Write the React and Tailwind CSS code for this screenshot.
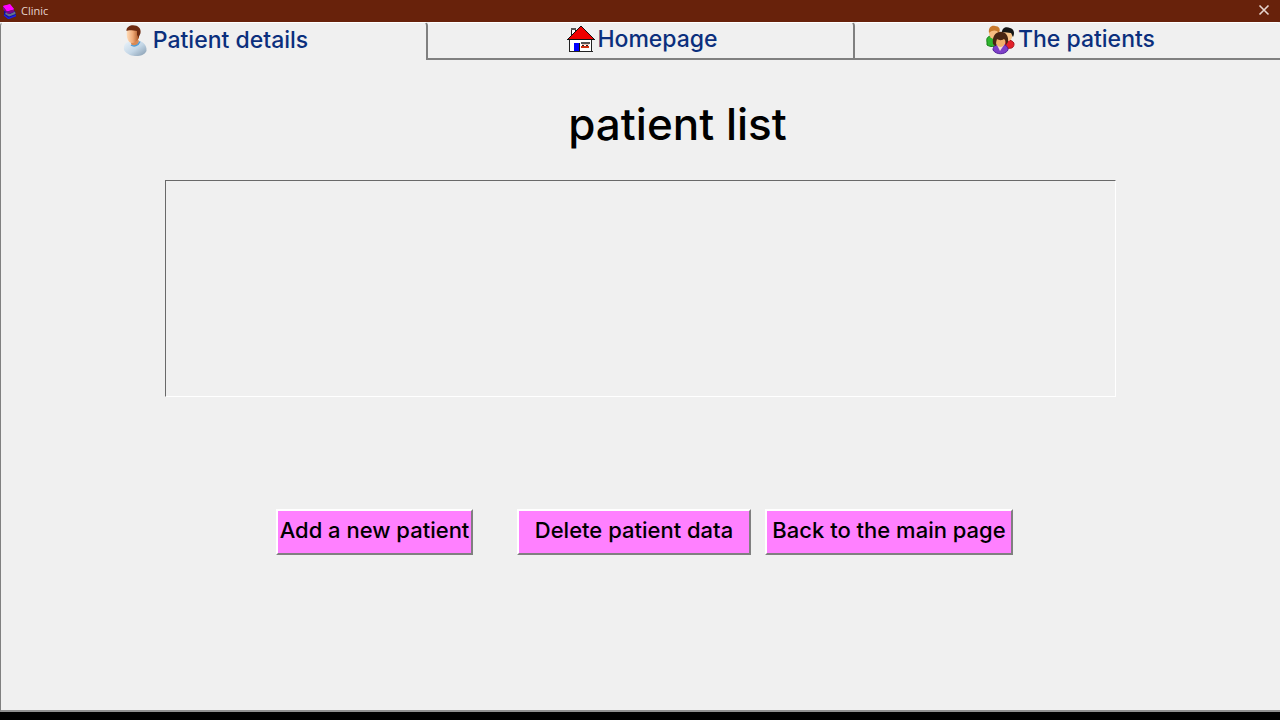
import React from "react";

function AppIcon() {
  return (
    <svg aria-hidden="true" className="h-4 w-4 shrink-0" viewBox="0 0 16 16">
      <path d="M3 8 3 11.500 7 16 15 13 14 8z" fill="#10109c" />
      <path d="M5 9 9 11 14 8.500 14.500 11 8 13.500 4 11z" fill="#64748b" />
      <path d="M3 12 7.500 15.500 15 12.500" fill="none" stroke="#2020e0" strokeWidth="1.400" />
      <path d="M2 3 9 1.500 13 6.500 6 8.500z" fill="#ff00ff" />
      <path d="M2 3v3.500l5 4.500 6-2V6.500L6 8.500z" fill="#7a0a86" />
      <path d="M2 3 9 1 13 6 6 8z" fill="#ff00ff" />
    </svg>
  );
}

function PersonIcon() {
  return (
    <svg aria-hidden="true" className="h-8 w-7 shrink-0" viewBox="0 0 28 32">
      <defs>
        <linearGradient id="skin" x1="0" x2="1">
          <stop offset="0" stopColor="#ffdcb8" />
          <stop offset="0.500" stopColor="#efaa78" />
          <stop offset="1" stopColor="#a85220" />
        </linearGradient>
        <linearGradient id="shirt" x1="0" y1="0" x2="1" y2="1">
          <stop offset="0" stopColor="#eef6fc" />
          <stop offset="0.550" stopColor="#c3d6e6" />
          <stop offset="1" stopColor="#8399ad" />
        </linearGradient>
      </defs>
      <path d="M1 26c-.5-5 1-7 4-8l8-2c6 1 11 4 10.500 11-2 4-6 5-10 5S4 31 1 26z" fill="url(#shirt)" />
      <path d="M8 19c0 4 7 4 8-2l-2-3H8z" fill="#d98a55" />
      <path d="M8 21c3 2 7 1 9-3.500" fill="none" stroke="#4b9bd8" strokeWidth="1.400" />
      <path d="M4 6c3-2 9-2 12 1v7c-2 3-4 5-7 5-4-.5-6-5-5-13z" fill="url(#skin)" />
      <path d="M3.500 7C3 3 7 1.200 10 1.200c5 0 8.500 3 7.500 8l-2 4.500-1.500-3V7C11 7 6 5.500 3.500 7z" fill="#6e2c12" />
    </svg>
  );
}

function HouseIcon() {
  return (
    <svg aria-hidden="true" className="h-7 w-7 shrink-0" viewBox="0 0 28 28" shapeRendering="crispEdges">
      <path d="M4 3h4v8H4z" fill="#fff" stroke="#222" />
      <path d="M4 3h5v2H4z" fill="#555" />
      <path d="M2.500 14h22v12h-22z" fill="#fff" stroke="#222" strokeWidth="1" />
      <path d="M14 1 27 14H1z" fill="#f00000" stroke="#111" strokeWidth="1" />
      <path d="M7 18h5v8H7z" fill="#0000ff" />
      <path d="M12 18h1v8h-1z" fill="#111" />
      <path d="M14 17h9v2h-9z" fill="#555" />
      <path d="M15 19h7v1h-7z" fill="#f4c0b0" />
      <path d="M14 21h8v2h-8z" fill="#d03010" />
      <path d="M15 20h2v1h-2zM19 20h2v1h-2z" fill="#222" />
      <path d="M2 26h24v1H2z" fill="#222" />
    </svg>
  );
}

function PeopleIcon() {
  return (
    <svg aria-hidden="true" className="h-8 w-8 shrink-0" viewBox="0 0 32 32">
      <path d="M3 19c-1-4 1-6 5-6l6 1v8c-3 2-8 2-11 0z" fill="#2fb62f" stroke="#168016" />
      <path d="M21 18c4-2 9 0 9 3 0 4-3 5-8 4z" fill="#e3202a" stroke="#a80e18" />
      <ellipse cx="10" cy="10" rx="5" ry="6" fill="#f8bd80" />
      <path d="M5 10c-1-6 3-8 6-7 4 0 6 3 4 7-2-3-5-3-7-2-1 0-2 1-3 2z" fill="#c8792c" />
      <ellipse cx="24" cy="12" rx="4.500" ry="6" fill="#f8c58a" />
      <path d="M18 9c0-4 4-6 8-4 4 1 5 5 3 9-1-1-1-3-2-4-3 0-5-1-9-1z" fill="#151515" />
      <path d="M9 27c0-4 3-6 7-6 5 0 8 2 8 6-3 5-12 5-15 0z" fill="#7d3fc8" stroke="#50209a" />
      <path d="m13 22 3 6 4-6z" fill="#f3dcd8" />
      <ellipse cx="16.500" cy="18" rx="5" ry="6" fill="#f0b06c" />
      <path d="M9 21c-1-7 2-12 7-12 5-1 9 4 8 10l-2 3c0-3 0-4-2-6-3 2-5 1-7 0-1 3-1 4-1 7-1 0-2-1-3-2z" fill="#4a2613" />
    </svg>
  );
}

function Tab({ icon, label, selected, last }) {
  return (
    <button
      type="button"
      role="tab"
      aria-selected={selected}
      className={
        "flex min-w-0 flex-1 items-center justify-center gap-0.5 rounded-t border-t border-t-white pb-1 pl-1 text-[23px] leading-7 font-medium text-[#0b2f7d] " +
        (selected ? "border-l border-l-[#808080] " : "border-b-2 border-b-[#808080] ") +
        (last ? "" : "border-r-2 border-r-[#808080]")
      }
    >
      {icon}
      <span>{label}</span>
    </button>
  );
}

function ActionButton({ className, children }) {
  return (
    <button
      type="button"
      className={
        "h-[46px] border-2 border-t-white border-r-[#808080] border-b-[#808080] border-l-white bg-[#ff80ff] pb-1 text-[22px] leading-7 font-medium whitespace-nowrap text-black " +
        className
      }
    >
      {children}
    </button>
  );
}

export default function App() {
  return (
    <div className="flex min-h-screen flex-col bg-[#f0f0f0] font-['Inter','Liberation_Sans',sans-serif]">
      <header className="flex h-[22px] items-center justify-between bg-[#68220b] pr-2 pl-px text-[#e6d5cf]">
        <div className="flex items-center gap-1">
          <AppIcon />
          <span className="font-['Open_Sans',sans-serif] text-[11px] leading-4">Clinic</span>
        </div>
        <button type="button" aria-label="Close" className="pb-1">
          <svg aria-hidden="true" className="h-4 w-4" viewBox="0 0 16 16" stroke="currentColor" strokeWidth="1.600">
            <path d="m3.500 4.500 9 9M12.500 4.500l-9 9" />
          </svg>
        </button>
      </header>

      <nav role="tablist" aria-label="Sections" className="flex h-[38px] w-full">
        <Tab icon={<PersonIcon />} label="Patient details" selected />
        <Tab icon={<HouseIcon />} label="Homepage" />
        <Tab icon={<PeopleIcon />} label="The patients" last />
      </nav>

      <main className="flex flex-1 flex-col items-center border-b-2 border-l border-b-[#909090] border-l-[#808080] px-41">
        <h1 className="mt-9 pl-[74px] text-[44px] leading-14 font-medium text-black">patient list</h1>
        <section
          aria-label="Patient list"
          className="mt-7 h-[217px] w-full border border-t-[#696969] border-r-white border-b-white border-l-[#696969]"
        />
        <div className="mt-28 flex pl-2">
          <ActionButton className="mr-11 w-[197px]">Add a new patient</ActionButton>
          <ActionButton className="mr-3.5 w-[234px]">Delete patient data</ActionButton>
          <ActionButton className="w-[248px]">Back to the main page</ActionButton>
        </div>
      </main>
      <footer className="h-2 bg-black" />
    </div>
  );
}
